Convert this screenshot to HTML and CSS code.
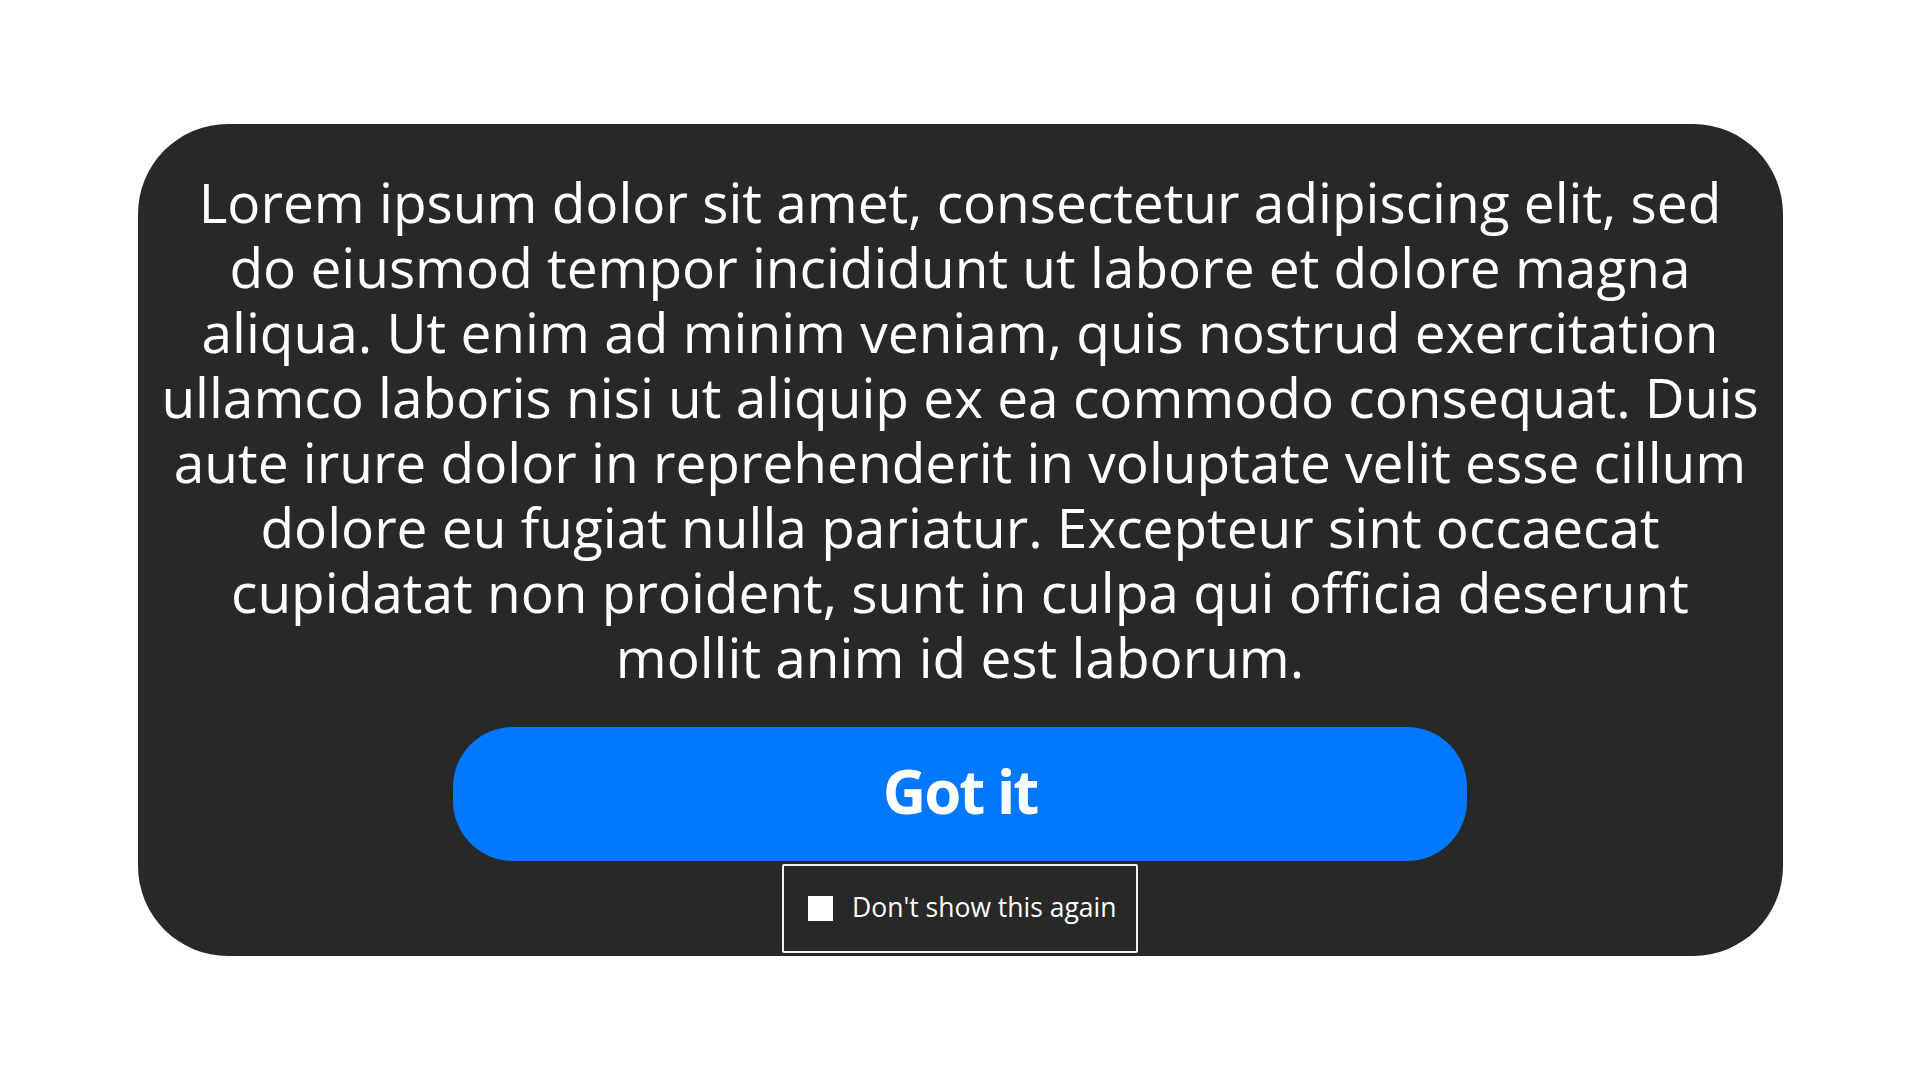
FILE: index.html
```html
<!DOCTYPE html>
<html lang="en">
<head>
<meta charset="utf-8">
<title>Notice</title>
<link rel="stylesheet" href="styles.css">
</head>
<body>
<div class="page">
  <div class="card">
    <p class="message">Lorem ipsum dolor sit amet, consectetur adipiscing elit, sed<br>do eiusmod tempor incididunt ut labore et dolore magna<br>aliqua. Ut enim ad minim veniam, quis nostrud exercitation<br>ullamco laboris nisi ut aliquip ex ea commodo consequat. Duis<br>aute irure dolor in reprehenderit in voluptate velit esse cillum<br>dolore eu fugiat nulla pariatur. Excepteur sint occaecat<br>cupidatat non proident, sunt in culpa qui officia deserunt<br>mollit anim id est laborum.</p>
    <button class="got-it" type="button">Got it</button>
    <label class="dont-show">
      <span class="box"></span>
      <span class="label-text">Don't show this again</span>
    </label>
  </div>
</div>
</body>
</html>
```
FILE: styles.css
```css
html, body {
  margin: 0;
  padding: 0;
  background: #ffffff;
}
.page {
  width: 100vw;
  height: 100vh;
  display: flex;
  align-items: center;
  justify-content: center;
}
.card {
  width: 1645px;
  box-sizing: border-box;
  background: #282828;
  border-radius: 90px;
  padding: 45px 20px 3px;
  display: flex;
  flex-direction: column;
  align-items: center;
  font-family: "Open Sans", Lato, sans-serif;
  color: #ffffff;
}
.message {
  margin: 0;
  font-size: 55px;
  line-height: 65px;
  text-align: center;
  white-space: nowrap;
}
.got-it {
  margin-top: 38px;
  width: 1014px;
  height: 134px;
  border: none;
  border-radius: 60px;
  background: #0078ff;
  color: #ffffff;
  font-family: "Open Sans", Lato, sans-serif;
  font-weight: 700;
  font-size: 60px;
  letter-spacing: -2px;
  padding: 0 0 6px;
  cursor: pointer;
}
.dont-show {
  margin-top: 3px;
  width: 356px;
  height: 89px;
  box-sizing: border-box;
  border: 2px solid #f2f2f2;
  border-radius: 2px;
  display: flex;
  align-items: center;
  padding-left: 24px;
  padding-bottom: 3px;
  gap: 19px;
  font-size: 26.5px;
}
.box {
  width: 25px;
  height: 25px;
  background: #ffffff;
  flex: none;
  margin-top: 3px;
}
.label-text {
  white-space: nowrap;
}
```
